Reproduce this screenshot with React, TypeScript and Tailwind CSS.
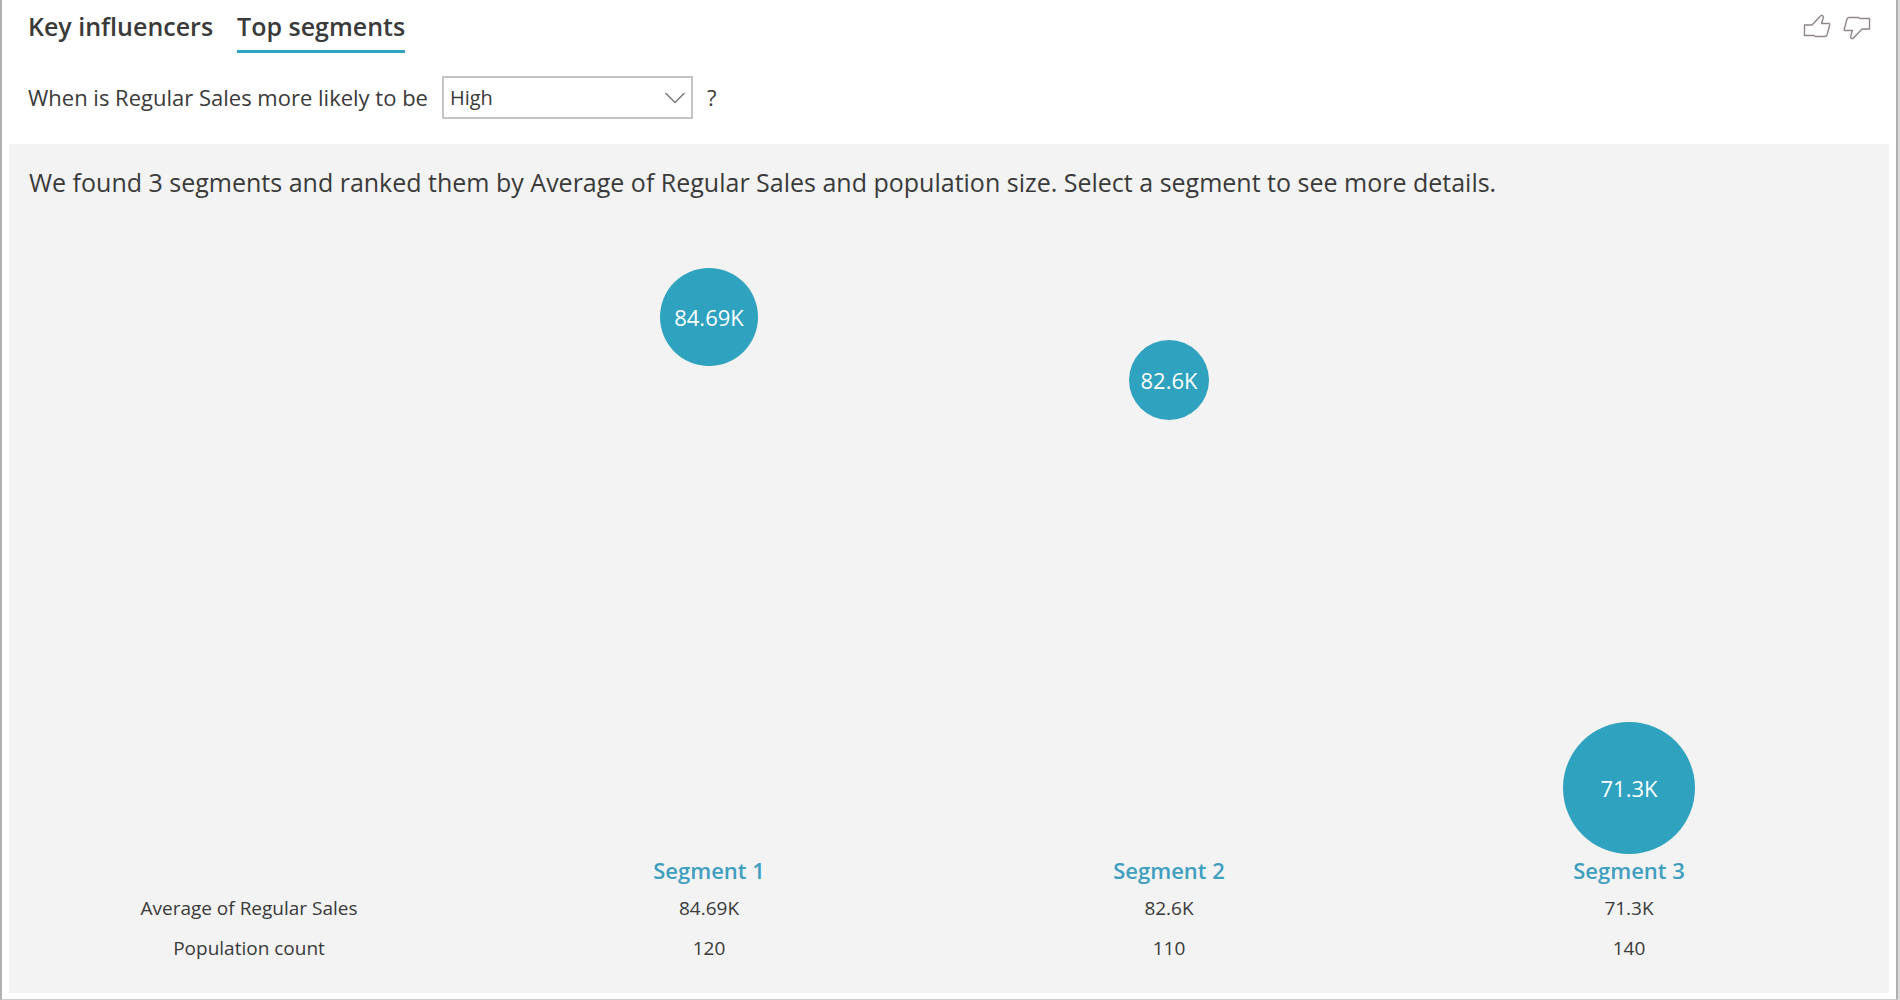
import { useState } from 'react';

type Segment = {
  name: string;
  average: string;
  population: number;
  // bubble centre from the top of the plot, and its diameter
  center: number;
  size: number;
};

const segments: Segment[] = [
  { name: 'Segment 1', average: '84.69K', population: 120, center: 117, size: 98 },
  { name: 'Segment 2', average: '82.6K', population: 110, center: 180, size: 80 },
  { name: 'Segment 3', average: '71.3K', population: 140, center: 588, size: 132 },
];

const tabs = ['Key influencers', 'Top segments'];

function ThumbIcon({ className = '' }: { className?: string }) {
  return (
    <svg viewBox="0 0 28 24" className={`w-7 h-6 ${className}`} fill="none" stroke="#8f868b" strokeWidth="1.4" strokeLinejoin="round">
      <path d="M1.500 11 H9 L17 2.500 Q18.500 0.500 20 2 Q20.700 3 20 5 L18.500 9.500 H26 Q27 9.500 26.700 11 L24 21 Q23.500 22.500 22 22.500 H12.500 L11 21.500 H1.500 Z" />
    </svg>
  );
}

export default function App() {
  const [activeTab, setActiveTab] = useState('Top segments');
  const [level, setLevel] = useState('High');

  return (
    <div className="min-h-screen flex pr-0.5 bg-[#dcdcdc] text-[#3a3a3a] font-['Open_Sans',sans-serif]">
      <div className="flex-1 flex flex-col bg-white border-x-2 border-b border-x-[#b0b0b0] border-b-[#cccccc]">
        <header className="flex items-start justify-between pl-[26px] pr-[25px]">
          <nav className="flex gap-6 pt-2">
            {tabs.map((tab) => (
              <button
                key={tab}
                onClick={() => setActiveTab(tab)}
                className={`h-[45px] pb-1.5 text-[25px] leading-9 font-semibold border-b-[3px] ${
                  activeTab === tab ? 'border-[#2ea2bf]' : 'border-transparent'
                }`}
              >
                {tab}
              </button>
            ))}
          </nav>
          <div className="flex gap-3 pt-3">
            <button aria-label="Like">
              <ThumbIcon />
            </button>
            <button aria-label="Dislike" className="pt-1">
              <ThumbIcon className="rotate-180" />
            </button>
          </div>
        </header>

        <div className="flex items-center gap-3.5 pl-[26px] pt-[23px] pb-[25px] text-[22px]">
          <label htmlFor="level">When is Regular Sales more likely to be</label>
          <div className="relative">
            <select
              id="level"
              value={level}
              onChange={(e) => setLevel(e.target.value)}
              className="block w-[251px] h-[43px] pl-1.5 appearance-none bg-white border-2 border-[#c4c4c4] text-[20px]"
            >
              <option>High</option>
              <option>Low</option>
            </select>
            <svg viewBox="0 0 20 12" className="absolute right-2 top-4 w-5 h-3 pointer-events-none" fill="none" stroke="#777" strokeWidth="1.4">
              <path d="M0.500 1 L10 10.500 L19.500 1" />
            </svg>
          </div>
          <span>?</span>
        </div>

        <main className="flex-1 flex flex-col mx-[7px] mb-1.5 bg-[#f3f3f3]">
          <p className="pl-5 pt-5 text-[25px] leading-9">
            We found 3 segments and ranked them by Average of Regular Sales and population size. Select a segment to see more details.
          </p>

          <div className="flex-1 flex flex-col pl-2.5 pr-[30px]">
            {/* Bubbles */}
            <div className="flex-1 grid grid-cols-4 min-h-[650px]">
              <div />
              {segments.map((s) => (
                <div key={s.name} className="relative">
                  <button
                    className="absolute left-1/2 -translate-x-1/2 -translate-y-1/2 rounded-full bg-[#2ea2bf] text-white text-[22px]"
                    style={{ top: s.center, width: s.size, height: s.size }}
                  >
                    {s.average}
                  </button>
                </div>
              ))}
            </div>

            <table className="w-full table-fixed mb-[25px] text-center text-[19px]">
              <thead>
                <tr className="h-9 text-[22px] text-[#3f9fbf]">
                  <td />
                  {segments.map((s) => (
                    <th key={s.name} scope="col" className="font-semibold">{s.name}</th>
                  ))}
                </tr>
              </thead>
              <tbody>
                <tr className="h-10">
                  <th scope="row" className="font-normal">Average of Regular Sales</th>
                  {segments.map((s) => (
                    <td key={s.name}>{s.average}</td>
                  ))}
                </tr>
                <tr className="h-10">
                  <th scope="row" className="font-normal">Population count</th>
                  {segments.map((s) => (
                    <td key={s.name}>{s.population}</td>
                  ))}
                </tr>
              </tbody>
            </table>
          </div>
        </main>
      </div>
    </div>
  );
}
